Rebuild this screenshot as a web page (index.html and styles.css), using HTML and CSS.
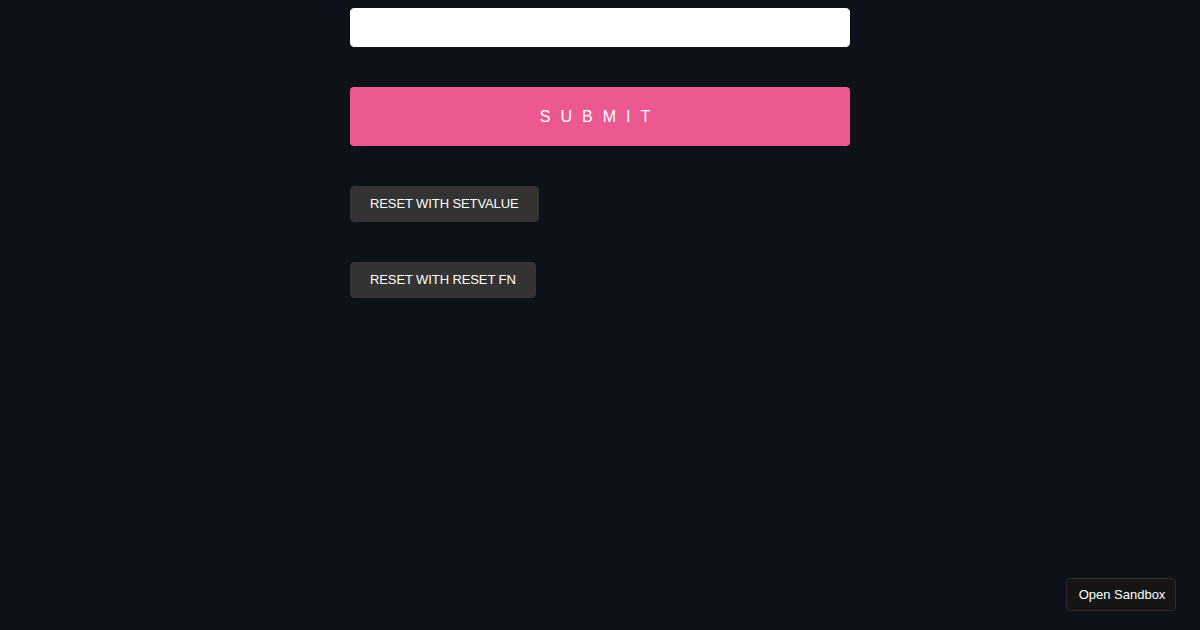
FILE: index.html
```html
<!DOCTYPE html>
<html>
<head>
<meta charset="utf-8">
<link rel="stylesheet" href="styles.css">
</head>
<body>
<form class="form">
  <input class="field" type="text">
  <button class="submit" type="button">Submit</button>
  <button class="reset" type="button">Reset with setValue</button>
  <button class="reset" type="button">Reset with reset fn</button>
</form>
<a class="sandbox">Open Sandbox</a>
</body>
</html>
```

FILE: styles.css
```css
html, body {
  margin: 0;
  padding: 0;
  background: #0e101a;
  height: 100%;
  font-family: "Liberation Sans", Arial, sans-serif;
}
body {
  padding-top: 8px;
  box-sizing: border-box;
  overflow: hidden;
}
.form {
  width: 500px;
  margin: 0 auto;
}
.field {
  display: block;
  box-sizing: border-box;
  width: 100%;
  height: 39px;
  margin: 0 0 10px;
  padding: 10px 15px;
  border: 1px solid #fff;
  border-radius: 4px;
  background: #fff;
  font-size: 14px;
  font-family: inherit;
}
.submit {
  display: block;
  box-sizing: border-box;
  width: 100%;
  height: 59px;
  margin: 40px 0 0;
  padding: 0;
  border: none;
  border-radius: 4px;
  background: #ec5990;
  color: #fff;
  font-family: inherit;
  font-size: 16px;
  font-weight: 300;
  letter-spacing: 10px;
  text-transform: uppercase;
}
.reset {
  display: block;
  box-sizing: border-box;
  height: 36px;
  margin: 40px 0 0;
  padding: 0 19px 2px;
  border: 1px solid #333;
  border-radius: 4px;
  background: #333;
  color: #fff;
  font-family: inherit;
  font-size: 13px;
  letter-spacing: -0.1px;
  text-transform: uppercase;
}
.sandbox {
  position: fixed;
  right: 24px;
  bottom: 19px;
  box-sizing: border-box;
  height: 33px;
  width: 110px;
  display: flex;
  align-items: center;
  justify-content: center;
  padding-left: 2px;
  border: 1px solid #2c2c2c;
  border-radius: 4px;
  background: #151515;
  color: #fff;
  font-size: 13px;
}
```
